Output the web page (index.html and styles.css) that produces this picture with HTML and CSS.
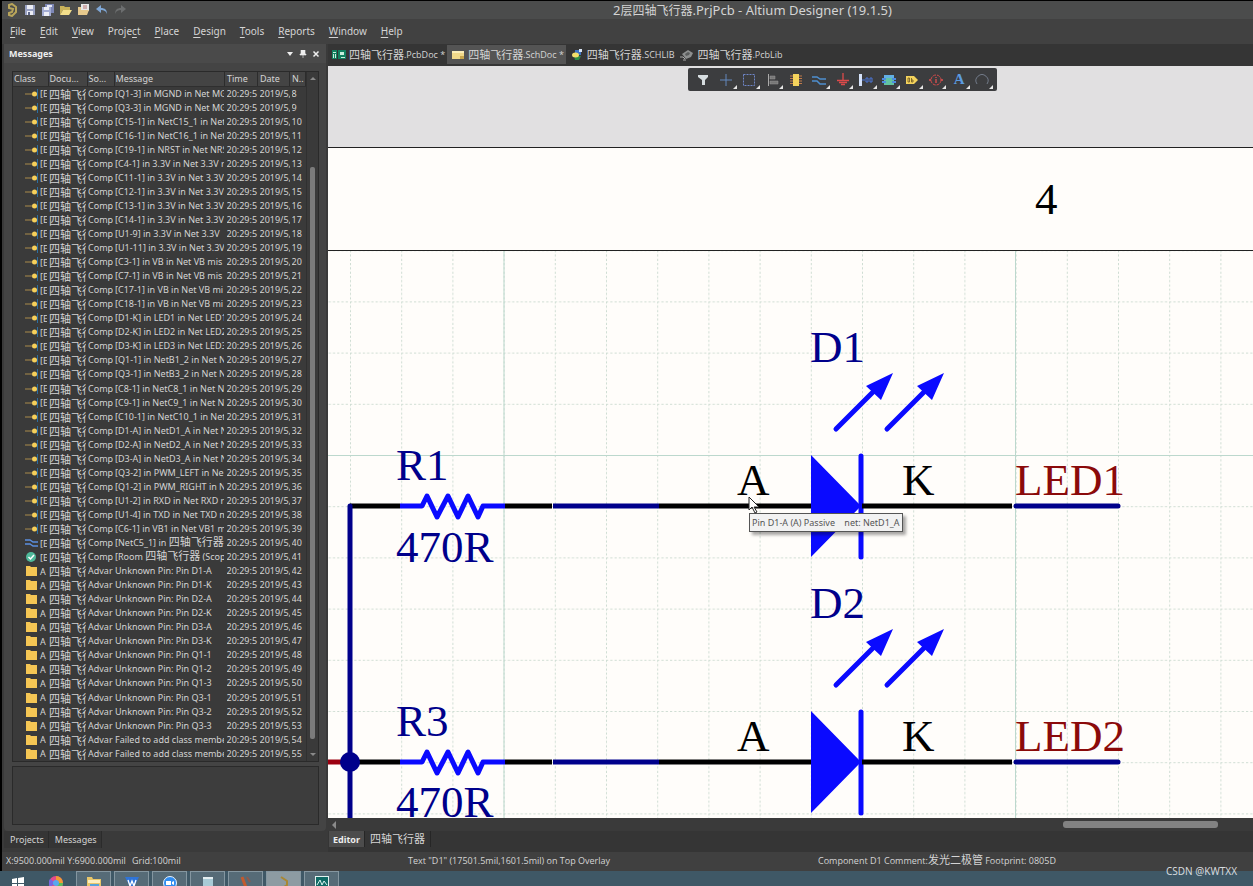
FILE: index.html
```
<!DOCTYPE html>
<html lang="zh-CN">
<head>
  <meta charset="UTF-8" />
  <meta name="viewport" content="width=device-width, initial-scale=1" />
  <title>2层四轴飞行器.PrjPcb - Altium Designer (19.1.5)</title>
  <link rel="stylesheet" href="styles.css">
</head>
<body>
  <div class="app">
    <header class="titlebar">
      <div class="quick-access">
        <svg class="logo" viewBox="0 0 12 14" width="12" height="14"><path d="M3 5V2l3-1 4 3v5l-4 4-3-1v-2l3-1 1-3z" fill="none" stroke="#b9a55a" stroke-width="2"/></svg>
        <button aria-label="Save"><svg viewBox="0 0 12 12" width="12" height="12"><path d="M1 1h10v10H1z" fill="#9aa3c4"/><path d="M3 1h6v4H3zM3 7h6v4H3z" fill="#eceef6"/><path d="M4 8h2v3H4z" fill="#5d6688"/></svg></button>
        <button aria-label="Save all"><svg viewBox="0 0 12 12" width="12" height="12"><path d="M3 0h9v9H3z" fill="#7c86b5"/><path d="M5 1h5v2H5z" fill="#e4e7f5"/><path d="M0 3h9v9H0z" fill="#a3acd3"/><path d="M2 3h5v3H2zM2 8h5v4H2z" fill="#eceef6"/></svg></button>
        <button aria-label="Open"><svg viewBox="0 0 12 12" width="12" height="12"><path d="M0 2h4l1 1h5v3H3l-3 5z" fill="#c9b25a"/><path d="M3 6h9l-3 5H0z" fill="#f3df8b"/></svg></button>
        <button aria-label="Open project"><svg viewBox="0 0 12 12" width="12" height="12"><path d="M3 0h8v7H3z" fill="#e9e9e9"/><path d="M5 2h4M5 4h4" stroke="#b77" /><path d="M0 3h3v3h8l-2 5H0z" fill="#e6c98c"/></svg></button>
        <button aria-label="Undo"><svg viewBox="0 0 12 12" width="12" height="12"><path d="M5 1L0 5l5 4V6c3 0 5 1 6 4 0-4-2-6-6-6z" fill="#7fa7d6"/></svg></button>
        <button aria-label="Redo"><svg viewBox="0 0 12 12" width="12" height="12"><path d="M7 1l5 4-5 4V6C4 6 2 7 1 10c0-4 2-6 6-6z" fill="#6c6e6f"/></svg></button>
      </div>
      <h1>2<span class="title-cjk">层四轴飞行器</span>.PrjPcb - Altium Designer (19.1.5)</h1>
    </header>

    <nav class="menubar">
      <button><u>F</u>ile</button>
      <button><u>E</u>dit</button>
      <button><u>V</u>iew</button>
      <button>Proje<u>c</u>t</button>
      <button><u>P</u>lace</button>
      <button><u>D</u>esign</button>
      <button><u>T</u>ools</button>
      <button><u>R</u>eports</button>
      <button><u>W</u>indow</button>
      <button><u>H</u>elp</button>
    </nav>

    <main class="workspace">
      <aside class="sidebar">
        <section class="panel">
          <div class="panel-head">
            <h2>Messages</h2>
            <button aria-label="Panel menu"><svg viewBox="0 0 8 8" width="8" height="8"><path d="M1 2h6L4 6z" fill="#eee"/></svg></button>
            <button aria-label="Pin"><svg viewBox="0 0 8 8" width="8" height="8"><path d="M2 0h4v4h1v1H1V4h1zM4 5v3" fill="#eee" stroke="#eee" stroke-width=".6"/></svg></button>
            <button aria-label="Close"><svg viewBox="0 0 8 8" width="8" height="8"><path d="M1.500 1.500l5 5M6.500 1.500l-5 5" stroke="#eee" stroke-width="1.500"/></svg></button>
          </div>
          <div class="message-list">
            <table class="messages">
              <colgroup>
                <col class="col-class"><col class="col-doc"><col class="col-source"><col>
                <col class="col-time"><col class="col-date"><col class="col-no">
              </colgroup>
              <thead>
                <tr><th>Class</th><th>Docu...</th><th>So...</th><th>Message</th><th>Time</th><th>Date</th><th>N..</th></tr>
              </thead>
              <tbody id="messageRows"></tbody>
            </table>
            <div class="vscroll">
              <span class="arrow-up"></span>
              <span class="vthumb"></span>
              <span class="arrow-down"></span>
            </div>
          </div>
          <div class="details"></div>
        </section>
        <div class="side-tabs">
          <button>Projects</button>
          <button>Messages</button>
        </div>
      </aside>

      <section class="editor">
        <div class="doc-tabs">
          <button class="doc-tab"><svg viewBox="0 0 14 12" width="14" height="12"><path d="M0 1h14v9H0z" fill="#12805f"/><path d="M1 3h3v1H1zM1 5h1v4H1zM3 5h1v4H3zM8 3h4v3H8zM9 8h4v1H9z" fill="#c8f0dc"/><path d="M5 1h1v9H5z" fill="#333"/></svg><span class="cjk">四轴飞行器</span>.PcbDoc *</button>
          <button class="doc-tab active"><svg viewBox="0 0 14 12" width="14" height="12"><path d="M1 2h12v8H1z" fill="#f1d98a"/><path d="M1 2h12v2H1z" fill="#fbeeb8"/><path d="M9 7h4v3H9z" fill="#c9a84e"/></svg><span class="cjk">四轴飞行器</span>.SchDoc *</button>
          <button class="doc-tab"><svg viewBox="0 0 14 12" width="14" height="12"><path d="M5 1h6v5H5z" fill="#3f74c4"/><path d="M9 0h3v3H9z" fill="#d8e4f5"/><path d="M4 7h7l-2 4H5z" fill="#2c8c46"/><ellipse cx="5.500" cy="6" rx="3.500" ry="2.500" fill="#f3df6a"/></svg><span class="cjk">四轴飞行器</span>.SCHLIB</button>
          <button class="doc-tab"><svg viewBox="0 0 14 12" width="14" height="12"><path d="M2 5l6-4 5 3-2 4-5 2z" fill="#8d8f8f"/><path d="M5 5l3-2 2 1-1 2-3 1z" fill="#5a5c5c"/><path d="M0 8h3l2 2M3 11h3" stroke="#aaa" fill="none"/></svg><span class="cjk">四轴飞行器</span>.PcbLib</button>
        </div>

        <div class="canvas">
          <svg class="schematic" viewBox="328 66 925 752" preserveAspectRatio="xMinYMin slice">
            <defs>
              <pattern id="grid" x="350" y="250.200" width="51.200" height="51.200" patternUnits="userSpaceOnUse">
                <path d="M.5 0v51.200M0 .5h51.200" stroke="#cfddd3" stroke-dasharray="2.200 2.066" fill="none"/>
              </pattern>
              <g id="resistor">
                <path class="wire pin" d="M350 506h50M505 506h47M659 506h152"/>
                <path class="wire net" d="M553 506h106"/>
                <path class="wire body" d="M400 506h22l5-10 10 21 11-21 10 21 10-21 10 21 5-11h22"/>
              </g>
              <g id="led">
                <path class="wire body round" d="M836 429l38-38M887 429l38-38"/>
                <path class="solid" d="M893 373l-27 13 15 14zM944 373l-27 13 15 14zM811 455l50 51-50 51z"/>
                <path class="wire body round" d="M861 456v101"/>
                <path class="wire pin" d="M862 506h150"/>
                <path class="wire net round" d="M1016 506h102"/>
              </g>
            </defs>
            <rect class="desk" x="328" y="66" width="925" height="82"/>
            <rect class="paper" x="328" y="148" width="925" height="670"/>
            <rect x="328" y="251" width="925" height="567" fill="url(#grid)"/>
            <path class="major" d="M504 251v567M1015.500 251v567M328 455.500h925"/>
            <path class="frame" d="M328 147.500h925M328 250.500h925"/>

            <path class="wire power" d="M328 762h22"/>
            <use href="#resistor"/>
            <use href="#led"/>
            <use href="#resistor" y="256"/>
            <use href="#led" y="256"/>
            <path class="wire net round" d="M350 506v316"/>
            <circle class="junction" cx="350" cy="762" r="10"/>

            <text class="zone" x="1035" y="214">4</text>
            <text class="label" x="396" y="480">R1</text>
            <text class="label" x="396" y="562">470R</text>
            <text class="label" x="810" y="362">D1</text>
            <text class="pin-name" x="737" y="495">A</text>
            <text class="pin-name" x="902" y="495">K</text>
            <text class="net-name" x="1015" y="495">LED1</text>
            <text class="label" x="396" y="736">R3</text>
            <text class="label" x="396" y="817">470R</text>
            <text class="label" x="810" y="618">D2</text>
            <text class="pin-name" x="737" y="751">A</text>
            <text class="pin-name" x="902" y="751">K</text>
            <text class="net-name" x="1015" y="751">LED2</text>
          </svg>

          <div class="active-bar">
            <button aria-label="Filter"><svg viewBox="0 0 14 14"><path d="M2 2h10v2L9 7v5H6V7L2 4z" fill="#d6dde0"/></svg></button>
            <button class="more" aria-label="Move"><svg viewBox="0 0 14 14"><path d="M7 1v12M1 7h12" stroke="#6388bd"/></svg></button>
            <button class="more" aria-label="Select"><svg viewBox="0 0 14 14"><path d="M1.500 1.500h11v11h-11z" fill="none" stroke="#6e86c8" stroke-dasharray="2 1"/></svg></button>
            <button class="more" aria-label="Align"><svg viewBox="0 0 14 14"><path d="M2.500 1v12" stroke="#aaa"/><path d="M4 3h5v3H4zM4 8h8v3H4z" fill="#777" stroke="#999" stroke-width=".5"/></svg></button>
            <button aria-label="Part"><svg viewBox="0 0 14 14"><path d="M1 3h12M1 5.500h12M1 8h12M1 10.500h12" stroke="#c07a4a"/><path d="M4 1h6v12H4z" fill="#f4d35c"/></svg></button>
            <button class="more" aria-label="Wire"><svg viewBox="0 0 14 14"><path d="M0 4h5l3 2h6M0 8h5l3 3h6" fill="none" stroke="#4d8fd0" stroke-width="1.500"/></svg></button>
            <button class="more" aria-label="Ground"><svg viewBox="0 0 14 14"><path d="M7 0v7M1 7.500h12M3 9.500h8M5 11.500h4" stroke="#dd4a4a" stroke-width="1.300"/></svg></button>
            <button class="more" aria-label="Bus"><svg viewBox="0 0 14 14"><path d="M0 1h3v12H0z" fill="#d4e2fa"/><path d="M3 7h3M7 5v4h2V5zM11 5v4h2V5z" fill="none" stroke="#4a76d8"/></svg></button>
            <button class="more" aria-label="Sheet symbol"><svg viewBox="0 0 14 14"><path d="M2 2h10v10H2z" fill="#62c3a2"/><path d="M2 2h10v3H2z" fill="#62b0e4"/><path d="M0 6h4M0 9h4M10 6h4M10 9h4" stroke="#4e8be0" stroke-width="2"/></svg></button>
            <button class="more" aria-label="Port"><svg viewBox="0 0 14 14"><path d="M1 3h8l4 4-4 4H1z" fill="#f4d35c"/><path d="M3 5v4M3 5h1.500v4H3M6.500 5v4H8V7H6.500" fill="none" stroke="#6b5520" stroke-width=".8"/></svg></button>
            <button class="more" aria-label="Directive"><svg viewBox="0 0 14 14"><circle cx="7" cy="7" r="5" fill="none" stroke="#d44a4a" stroke-dasharray="3 1"/><path d="M7 4v1M7 6v4M0 7h2M12 7h2" stroke="#e05050" stroke-width="1.300"/></svg></button>
            <button class="more text-tool" aria-label="Text">A</button>
            <button class="more" aria-label="Arc"><svg viewBox="0 0 14 14"><path d="M2 11a6 6 0 1 1 10 0" fill="none" stroke="#737b8a"/></svg></button>
          </div>

          <div class="tooltip">Pin D1-A (A) Passive &nbsp;&nbsp; net: NetD1_A</div>
          <svg class="cursor" viewBox="0 0 12 18" width="12" height="18"><path d="M1 1v13l3-3 3 6 2-1-3-5h5z" fill="#fff" stroke="#222"/></svg>
        </div>

        <div class="hscroll">
          <span class="arrow-left"></span>
          <span class="hthumb"></span>
        </div>
        <div class="editor-tabs">
          <button class="active">Editor</button>
          <button><span class="cjk">四轴飞行器</span></button>
        </div>
      </section>
    </main>

    <footer class="statusbar">
      <span class="coords">X:9500.000mil Y:6900.000mil</span>
      <span class="grid-size">Grid:100mil</span>
      <span class="hint">Text "D1" (17501.5mil,1601.5mil) on Top Overlay</span>
      <span class="component">Component D1 Comment:<span class="cjk">发光二极管</span> Footprint: 0805D</span>
    </footer>

    <div class="taskbar">
      <button class="plain" aria-label="Start"><svg viewBox="0 0 14 14"><path d="M1 3l5-1v5H1zM7 2l6-1v6H7zM1 8h5v5l-5-1zM7 8h6v6l-6-1z" fill="#fff"/></svg></button>
      <button class="plain" aria-label="Browser"><svg viewBox="0 0 14 14"><circle cx="7" cy="7" r="7" fill="#e34b8b"/><path d="M7 7V0a7 7 0 0 1 7 7z" fill="#f29a35"/><path d="M7 7h7a7 7 0 0 1-7 7z" fill="#5cbf58"/><path d="M7 7L1 3a7 7 0 0 0 0 8z" fill="#7667e0"/><circle cx="7" cy="7" r="3" fill="#58a8ee"/></svg></button>
      <button aria-label="Explorer"><svg viewBox="0 0 14 14"><path d="M0 1h5l1 2h8v10H0z" fill="#e8c66a"/><path d="M1 4h12v3H1z" fill="#fbefc0"/><path d="M3 8h9v5H3z" fill="#56a3d8"/></svg></button>
      <button aria-label="Writer"><svg viewBox="0 0 14 14"><path d="M0 1h14L8 13H6z" fill="#2f74d8"/><path d="M3 4l2 6 2-5 2 5 2-6" fill="none" stroke="#fff" stroke-width="1.300"/></svg></button>
      <button aria-label="Meeting"><svg viewBox="0 0 14 14"><circle cx="7" cy="7" r="6.500" fill="#2f8cf0" stroke="#eaf4ff"/><path d="M3 5h5v4H3zM9 6l2-1v4L9 8z" fill="#fff"/></svg></button>
      <button aria-label="Notepad"><svg viewBox="0 0 14 14"><path d="M2 1h10v13H2z" fill="#a9cbd6"/><path d="M2 1h10v2H2z" fill="#e5eef1"/></svg></button>
      <button aria-label="Tools"><svg viewBox="0 0 14 14"><path d="M3 1l5 13" stroke="#c35a2d" stroke-width="3"/><path d="M8 1l3 5" stroke="#8e5a4c" stroke-width="2"/></svg></button>
      <button class="current" aria-label="Altium Designer"><svg viewBox="0 0 14 14"><path d="M4 1l6 4v4l-6 4" fill="none" stroke="#a98733" stroke-width="2"/></svg></button>
      <button aria-label="Recorder"><svg viewBox="0 0 14 14"><path d="M0 0h14v14H0z" fill="#e3f2ef"/><path d="M1 1h12v12H1z" fill="#0f6a65"/><path d="M2 9l3-5 2 5 2-4 3 4" fill="none" stroke="#d9f3ee"/></svg></button>
      <span class="watermark">CSDN @KWTXX</span>
    </div>
  </div>

  <script src="messages.js"></script>
</body>
</html>
```

FILE: styles.css
```
* {
  box-sizing: border-box;
}
body {
  margin: 0;
  background: #000;
  color: #d4d4d4;
  font-family: "Noto Sans", "Noto Sans CJK SC", sans-serif;
  font-size: 9px;
}
button {
  padding: 0;
  border: none;
  background: none;
  color: inherit;
  font: inherit;
  white-space: nowrap;
}
svg {
  display: block;
}
h1, h2 {
  margin: 0;
}
.cjk {
  font-family: "Noto Sans CJK SC", sans-serif;
  font-size: 11px;
  line-height: 1;
}
.app {
  display: flex;
  flex-direction: column;
  height: 100vh;
  padding: 1px 0 0 2px;
  overflow: hidden;
}

/* title and menu */
.titlebar {
  display: flex;
  align-items: center;
  flex: 0 0 18px;
  background: #4b4c4c;
}
.quick-access {
  display: flex;
  align-items: center;
  gap: 6px;
  width: 250px;
  padding-left: 4px;
}
.titlebar h1 {
  flex: 1;
  text-align: center;
  font-size: 13px;
  line-height: 18px;
  font-weight: 400;
}
.title-cjk {
  font-size: 12px;
  line-height: 1;
}
.menubar {
  display: flex;
  gap: 14px;
  flex: 0 0 25px;
  padding: 0 0 2px 8px;
  background: #414141;
  font-size: 10px;
}
.menubar u {
  text-underline-offset: 2px;
}

/* workspace */
.workspace {
  display: flex;
  flex: 1;
  min-height: 0;
  background: #353535;
}
.sidebar {
  display: flex;
  flex-direction: column;
  flex: 0 0 326px;
  padding: 0 2px 4px;
  background: #3a3a3a;
}
.panel {
  display: flex;
  flex-direction: column;
  flex: 1;
  min-height: 0;
  padding: 0 7px 6px 8px;
  background: #444;
  border-radius: 0 0 4px 4px;
}
.panel-head {
  display: flex;
  align-items: center;
  gap: 5px;
  flex: 0 0 19px;
  margin: 0 -7px 8px -8px;
  padding: 0 6px 0 5px;
  background: #4a4a4a;
}
.panel-head h2 {
  flex: 1;
  font-size: 9px;
  color: #eee;
}
.message-list {
  display: flex;
  flex: 1;
  min-height: 0;
  border: 1px solid #2a2a2a;
  background: #3a3a3a;
  overflow: hidden;
}
.messages {
  flex: 1;
  width: 0;
  height: 100%;
  table-layout: fixed;
  border-collapse: collapse;
  line-height: 13px;
}
.col-class { width: 35px; }
.col-doc { width: 39px; }
.col-source { width: 27px; }
.col-time { width: 33px; }
.col-date { width: 32px; }
.col-no { width: 16px; }
.messages th {
  height: 14px;
  padding: 0 0 0 1px;
  background: #444;
  border-right: 1px solid #2c2c2c;
  border-bottom: 1px solid #2f2f2f;
  font-weight: 400;
  text-align: left;
  white-space: nowrap;
}
.messages td {
  height: 14px;
  padding: 0 1px;
}
.messages th:nth-child(n+5), .messages td:nth-child(n+5) {
  padding: 0 0 0 2px;
}
.clip {
  display: block;
  height: 14px;
  line-height: 14px;
  white-space: nowrap;
  overflow: hidden;
}
.kind {
  display: flex;
  align-items: center;
  gap: 2px;
  height: 14px;
  padding-left: 11px;
  overflow: hidden;
}
.kind svg {
  flex: none;
}
.vscroll {
  display: flex;
  flex-direction: column;
  align-items: center;
  flex: 0 0 12px;
  padding: 5px 0;
  border-left: 1px solid #303030;
}
.arrow-up, .arrow-down {
  border: 3px solid transparent;
}
.arrow-up {
  border-top: 0;
  border-bottom-color: #8a8a8a;
}
.arrow-down {
  border-bottom: 0;
  border-top-color: #8a8a8a;
}
.vthumb {
  flex: 1;
  width: 5px;
  margin: 87px 0 14px;
  border-radius: 2px;
  background: #7b7b7b;
}
.details {
  flex: 0 0 59px;
  margin-top: 4px;
  border: 1px solid #2a2a2a;
  background: #3d3d3d;
}
.side-tabs {
  display: flex;
  height: 17px;
}
.side-tabs button {
  padding: 0 4px 0 6px;
  background: #353535;
  border-right: 1px solid #2b2b2b;
}

/* editor */
.editor {
  display: flex;
  flex-direction: column;
  flex: 1;
  min-width: 0;
}
.doc-tabs {
  display: flex;
  flex: 0 0 22px;
  padding: 1px 0 2px;
  font-family: "Open Sans", sans-serif;
}
.doc-tab {
  display: flex;
  align-items: center;
  padding: 0 2px 0 4px;
}
.doc-tab svg {
  margin-right: 3px;
}
.doc-tab.active {
  background: #545454;
}
.canvas {
  position: relative;
  flex: 1;
  min-height: 0;
  overflow: hidden;
}
.schematic {
  width: 100%;
  height: 100%;
  font-family: "Liberation Serif", serif;
  font-size: 45px;
}
.desk { fill: #e1e0e1; }
.paper { fill: #fffdfa; }
.major { stroke: #bcd8cd; fill: none; }
.frame { stroke: #222; fill: none; }
.wire { fill: none; stroke-width: 5; stroke-linejoin: round; }
.pin { stroke: #000; }
.net { stroke: #00008b; }
.body { stroke: #0a0aff; }
.power { stroke: #9c0010; }
.round { stroke-linecap: round; }
.solid { fill: #0a0aff; }
.junction, .label { fill: #00008b; }
.zone, .pin-name { fill: #000; }
.net-name { fill: #8b0a0a; }

.active-bar {
  position: absolute;
  top: 2px;
  left: 360px;
  display: flex;
  width: 309px;
  height: 23px;
  padding: 0 3px;
  border-radius: 2px;
  background: #3c3d3f;
}
.active-bar button {
  display: flex;
  flex: 1;
  align-items: center;
  justify-content: center;
  position: relative;
}
.active-bar svg {
  width: 14px;
  height: 14px;
}
.more::after {
  content: "";
  position: absolute;
  right: 1px;
  bottom: 2px;
  border: 2px solid transparent;
  border-right-color: #e6e6e6;
  border-bottom-color: #e6e6e6;
}
.active-bar .text-tool {
  color: #5b9be0;
  font: bold 15px "Liberation Serif", serif;
}
.tooltip {
  position: absolute;
  top: 447px;
  left: 421px;
  padding: 0 2px;
  border: 1px solid #555;
  background: #f2f2f2;
  box-shadow: 3px 3px 3px rgba(0, 0, 0, 0.35);
  color: #555;
  line-height: 17px;
  white-space: nowrap;
}
.cursor {
  position: absolute;
  top: 430px;
  left: 420px;
}
.hscroll {
  display: flex;
  align-items: center;
  flex: 0 0 13px;
  padding: 0 35px 0 4px;
  background: #3a3a3a;
}
.arrow-left {
  border: 4px solid transparent;
  border-left: 0;
  border-right-color: #8a8a8a;
}
.hthumb {
  width: 155px;
  height: 7px;
  margin-left: auto;
  border-radius: 3px;
  background: #828282;
}
.editor-tabs {
  display: flex;
  flex: 0 0 21px;
  padding: 0 0 5px 1px;
}
.editor-tabs button {
  padding: 0 5px;
  border-right: 1px solid #262626;
}
.editor-tabs .active {
  padding: 0 4px;
  background: #4c4c4c;
  color: #eee;
  font-weight: 700;
}

/* bottom bars */
.statusbar {
  display: flex;
  align-items: center;
  flex: 0 0 19px;
  padding: 0 0 2px 4px;
  background: #404040;
  font-family: "Open Sans", sans-serif;
}
.coords {
  width: 126px;
}
.grid-size {
  width: 276px;
}
.hint {
  width: 410px;
}
.taskbar {
  display: flex;
  gap: 3px;
  flex: 0 0 15px;
  min-height: 0;
  position: relative;
  margin-left: -2px;
  background: #3f5866;
}
.taskbar button {
  display: flex;
  justify-content: center;
  width: 35px;
  height: 15px;
  padding-top: 4px;
  border: 1px solid #8496a0;
  border-bottom: none;
  background: #566b77;
  overflow: hidden;
}
.taskbar .plain {
  border-color: transparent;
  background: none;
}
.taskbar .current {
  background: #8d9ba2;
}
.taskbar svg {
  flex: none;
  width: 14px;
  height: 14px;
}
.watermark {
  position: absolute;
  right: 16px;
  bottom: 7px;
  color: #d5dade;
  font-size: 10px;
  line-height: 15px;
}
```

FILE: messages.js
```
const icons = {
  pin: '<svg viewBox="0 0 13 10" width="13" height="10"><path d="M0 5h7" stroke="#a98a4a"/><path d="M12.500 0v10" stroke="#2c6fa3"/><circle cx="9.500" cy="5" r="2.500" fill="#f6cf5a"/></svg>',
  net: '<svg viewBox="0 0 13 10" width="13" height="10"><path d="M0 2h5l3 2h5M0 6h5l3 2h5" fill="none" stroke="#5b8fe0" stroke-width="1.500"/></svg>',
  ok: '<svg viewBox="0 0 13 12" width="13" height="12"><circle cx="6" cy="6" r="5" fill="#4fb99a"/><path d="M3.500 6l2 2 3.500-4" fill="none" stroke="#fff" stroke-width="1.500"/></svg>',
  folder: '<svg viewBox="0 0 13 10" width="13" height="10"><path d="M1 0h4l1 1h6v9H1z" fill="#f5c654"/></svg>',
};

const pins = [
  '[Q1-3] in MGND in Net MG', '[Q3-3] in MGND in Net MG',
  '[C15-1] in NetC15_1 in Net', '[C16-1] in NetC16_1 in Net',
  '[C19-1] in NRST in Net NRS', '[C4-1] in 3.3V in Net 3.3V r',
  '[C11-1] in 3.3V in Net 3.3V', '[C12-1] in 3.3V in Net 3.3V',
  '[C13-1] in 3.3V in Net 3.3V', '[C14-1] in 3.3V in Net 3.3V',
  '[U1-9] in 3.3V in Net 3.3V', '[U1-11] in 3.3V in Net 3.3V',
  '[C3-1] in VB in Net VB mis', '[C7-1] in VB in Net VB mis',
  '[C17-1] in VB in Net VB mi', '[C18-1] in VB in Net VB mi',
  '[D1-K] in LED1 in Net LED1', '[D2-K] in LED2 in Net LED2',
  '[D3-K] in LED3 in Net LED3', '[Q1-1] in NetB1_2 in Net N',
  '[Q3-1] in NetB3_2 in Net N', '[C8-1] in NetC8_1 in Net N',
  '[C9-1] in NetC9_1 in Net N', '[C10-1] in NetC10_1 in Net',
  '[D1-A] in NetD1_A in Net N', '[D2-A] in NetD2_A in Net N',
  '[D3-A] in NetD3_A in Net N', '[Q3-2] in PWM_LEFT in Ne',
  '[Q1-2] in PWM_RIGHT in N', '[U1-2] in RXD in Net RXD r',
  '[U1-4] in TXD in Net TXD m', '[C6-1] in VB1 in Net VB1 m',
];
const unknownPins = ['D1-A', 'D1-K', 'D2-A', 'D2-K', 'D3-A', 'D3-K', 'Q1-1', 'Q1-2', 'Q1-3', 'Q3-1', 'Q3-2', 'Q3-3'];
const failed = 'Failed to add class membe';

const messages = [
  ...pins.map((text) => ['pin', '[E', 'Comp', text]),
  ['net', '[E', 'Comp', '[NetC5_1] in <span class="cjk">四轴飞行器</span>.'],
  ['ok', '[E', 'Comp', '[Room <span class="cjk">四轴飞行器</span> (Scop'],
  ...unknownPins.map((pin) => ['folder', 'A', 'Advar', 'Unknown Pin: Pin ' + pin]),
  ['folder', 'A', 'Advar', failed],
  ['folder', 'A', 'Advar', failed],
];

// numbering starts at 8, the first rows are scrolled out
document.getElementById('messageRows').innerHTML = messages.map(([kind, cls, source, text], i) => `
  <tr>
    <td><span class="kind">${icons[kind]}${cls}</span></td>
    <td><span class="clip cjk">四轴飞行</span></td>
    <td><span class="clip">${source}</span></td>
    <td><span class="clip">${text}</span></td>
    <td><span class="clip">20:29:5</span></td>
    <td><span class="clip">2019/5,</span></td>
    <td><span class="clip">${i + 8}</span></td>
  </tr>`).join('');
```
